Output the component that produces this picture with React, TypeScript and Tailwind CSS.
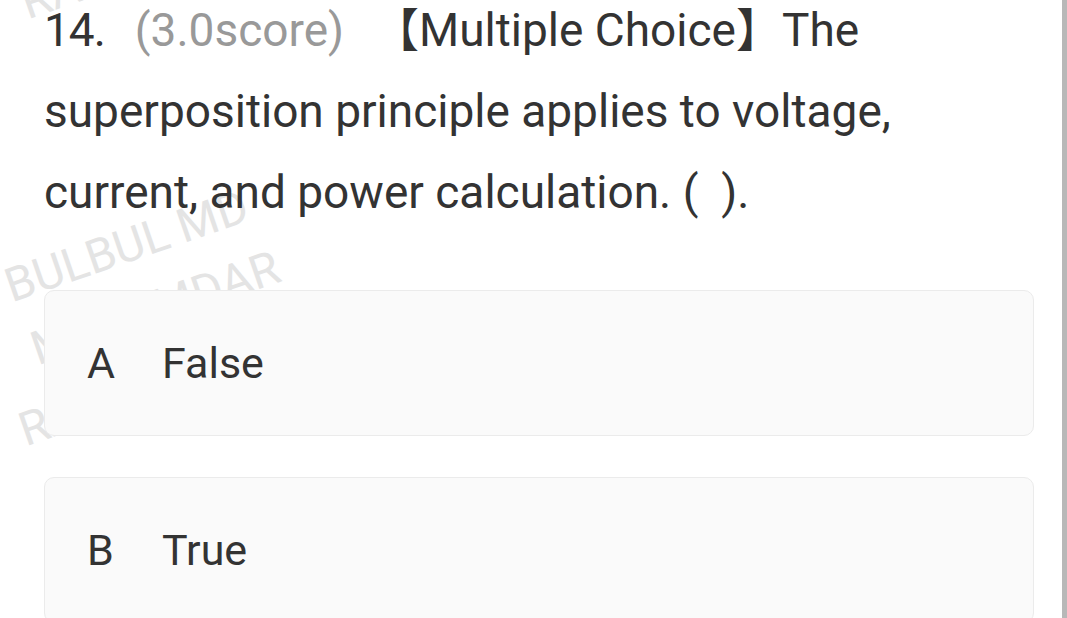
import React from 'react';

const options = [
  { key: 'A', text: 'False' },
  { key: 'B', text: 'True' },
];

// faint rotated watermark lines sitting under the page content
const marks = [
  { text: 'RAJ MAJUMDAR', cls: 'left-[30px] top-[-21px]' },
  { text: 'BULBUL MD', cls: 'left-[14px] top-[262px]' },
  { text: 'MAJUMDAR', cls: 'left-[40px] top-[325px]' },
  { text: 'RAJ MAJUMDAR', cls: 'left-[28px] top-[406px]' },
];

function Watermark() {
  return (
    <div className="pointer-events-none absolute inset-0 overflow-hidden select-none">
      {marks.map((m, i) => (
        <div
          key={i}
          className={`absolute ${m.cls} origin-bottom-left -rotate-[19deg] whitespace-nowrap text-[47px] leading-none text-[#e4e4e4]`}
        >
          {m.text}
        </div>
      ))}
    </div>
  );
}

export default function App() {
  return (
    <div
      className="relative h-[618px] w-[1067px] overflow-hidden bg-white"
      style={{ fontFamily: 'Roboto, "Noto Sans", "Noto Sans CJK SC", sans-serif' }}
    >
      <Watermark />
      <div className="relative flex h-full">
        <div className="-mt-[10px] flex-1 pl-[44px] pr-[28px]">
          <div className="text-[46px] leading-[81px] text-[#333333]">
            <span className="tracking-[-1px]">14.</span>
            <span className="ml-[30px] text-[#999999]">(3.0score)</span>
            <span className="ml-[29px]">【Multiple Choice】The superposition principle applies to voltage, current, and power calculation. (&nbsp;&nbsp;).</span>
          </div>
          <div className="mt-[57px] flex flex-col gap-[41px]">
            {options.map((o) => (
              <div
                key={o.key}
                className="flex h-[146px] items-center rounded-[10px] border border-[#ebebeb] bg-[#fafafa] pl-[42px] text-[43px] text-[#333333]"
              >
                <span className="w-[75px]">{o.key}</span>
                <span>{o.text}</span>
              </div>
            ))}
          </div>
        </div>
        <div className="w-[5px] shrink-0 bg-[#b8b8b8]" />
      </div>
    </div>
  );
}
